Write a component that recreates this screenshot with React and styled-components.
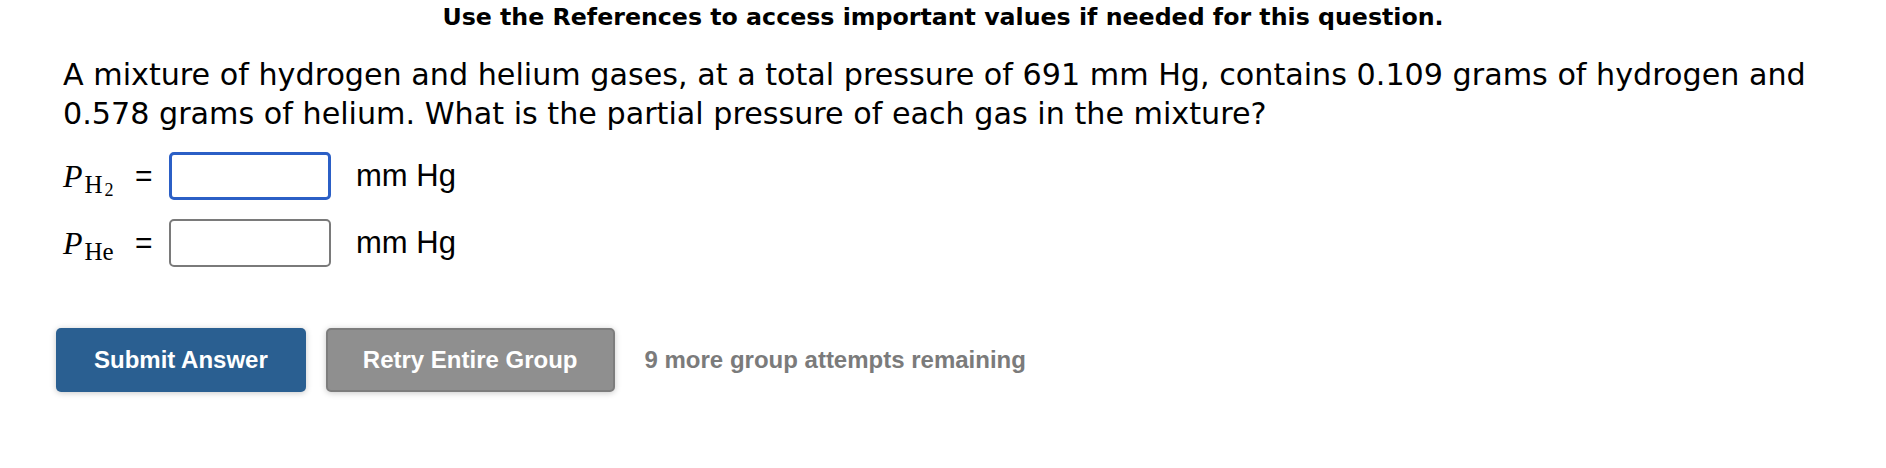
import styled, { createGlobalStyle } from "styled-components";

const GlobalStyle = createGlobalStyle`
  html, body {
    margin: 0;
    padding: 0;
    background: #ffffff;
  }
  body {
    font-family: "DejaVu Sans", Verdana, sans-serif;
    color: #000;
  }
`;

export default function App() {
  return (
    <>
      <GlobalStyle />
      <Page>
        <Notice>Use the References to access important values if needed for this question.</Notice>
        <Question>
          A mixture of hydrogen and helium gases, at a total pressure of 691 mm Hg, contains 0.109 grams of hydrogen and
          <br />
          0.578 grams of helium. What is the partial pressure of each gas in the mixture?
        </Question>
        <Answers>
          <AnswerRow>
            <MathLabel>
              <Var>P</Var>
              <Sub>
                H<SubSub>2</SubSub>
              </Sub>
            </MathLabel>
            <Equals>=</Equals>
            <Field type="text" $active />
            <Unit>mm Hg</Unit>
          </AnswerRow>
          <AnswerRow>
            <MathLabel>
              <Var>P</Var>
              <Sub>He</Sub>
            </MathLabel>
            <Equals>=</Equals>
            <Field type="text" />
            <Unit>mm Hg</Unit>
          </AnswerRow>
        </Answers>
        <Actions>
          <Button $variant="primary">Submit Answer</Button>
          <Button $variant="muted">Retry Entire Group</Button>
          <Attempts>9 more group attempts remaining</Attempts>
        </Actions>
      </Page>
    </>
  );
}

const Page = styled.div`
  width: 1886px;
  height: 468px;
  box-sizing: border-box;
  padding: 0 0 0 56px;
`;

const Notice = styled.div`
  margin: 0 0 0 -56px;
  padding-top: 3px;
  text-align: center;
  font-size: 23.7px;
  font-weight: 700;
  line-height: 28px;
`;

const Question = styled.p`
  margin: 24px 0 0 7px;
  font-size: 30.2px;
  line-height: 39px;
  white-space: nowrap;
`;

const Answers = styled.div`
  display: flex;
  flex-direction: column;
  gap: 19px;
  margin: 19px 0 0 7px;
`;

const AnswerRow = styled.div`
  display: flex;
  align-items: center;
  height: 48px;
`;

const MathLabel = styled.span`
  display: inline-flex;
  align-items: baseline;
  width: 72px;
  font-family: "Liberation Serif", "DejaVu Serif", serif;
`;

const Var = styled.span`
  font-style: italic;
  font-size: 32px;
  line-height: 1;
`;

const Sub = styled.span`
  font-size: 25px;
  position: relative;
  top: 6px;
  margin-left: 2px;
`;

const SubSub = styled.span`
  font-size: 18px;
  position: relative;
  top: 3px;
  margin-left: 2px;
`;

const Equals = styled.span`
  width: 34px;
  font-family: "Liberation Sans", Arial, sans-serif;
  font-size: 30px;
`;

const Field = styled.input`
  box-sizing: border-box;
  width: 162px;
  height: 48px;
  margin: 0;
  padding: 0 8px;
  border: ${(p) => (p.$active ? "3px solid #2b5fc6" : "2px solid #7a7a7a")};
  border-radius: 5px;
  background: #fff;
  outline: none;
`;

const Unit = styled.span`
  margin-left: 25px;
  font-family: "Liberation Sans", Arial, sans-serif;
  font-size: 31px;
`;

const Actions = styled.div`
  display: flex;
  align-items: center;
  gap: 20px;
  margin-top: 61px;
`;

const Button = styled.button`
  box-sizing: border-box;
  height: 64px;
  padding: 0 ${(p) => (p.$variant === "primary" ? "38px" : "35px")};
  border-radius: 5px;
  font-family: "Liberation Sans", Arial, sans-serif;
  font-weight: 700;
  font-size: 24px;
  color: #ffffff;
  background: ${(p) => (p.$variant === "primary" ? "#2a5f91" : "#8f8f8f")};
  border: ${(p) => (p.$variant === "primary" ? "0" : "2px solid #7d7d7d")};
  box-shadow: 0 1px 6px rgba(0, 0, 0, 0.22);
`;

const Attempts = styled.span`
  margin-left: 10px;
  font-family: "Liberation Sans", Arial, sans-serif;
  font-weight: 700;
  font-size: 24px;
  color: #7b7b7b;
`;
